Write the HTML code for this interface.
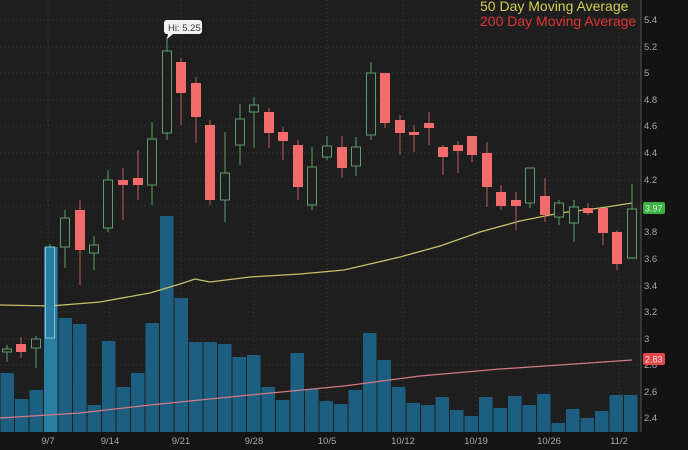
<!DOCTYPE html>
<html><head><meta charset="utf-8"><style>
html,body{margin:0;padding:0;background:#1e1e1e;width:688px;height:450px;overflow:hidden}
svg{display:block;font-family:"Liberation Sans",sans-serif}
</style></head><body>
<svg id="s" width="688" height="450" xmlns="http://www.w3.org/2000/svg">
<rect x="0" y="0" width="688" height="450" fill="#1e1e1e"/>
<rect x="641" y="0" width="47" height="450" fill="#131313"/>
<rect x="0" y="432" width="641" height="18" fill="#141414"/>
<g id="grid" stroke="#3a3a3a" stroke-width="1" stroke-dasharray="1,3"></g>
<g id="vol"></g>
<polyline fill="none" stroke="#c9c06a" stroke-width="1.3" points="0,305 50,306 100,302 150,293 180,284 195,279 210,282 250,277 300,274 344,270 400,257 440,246 480,232 520,221 560,213 600,208 632,203"/>
<polyline fill="none" stroke="#d07a86" stroke-width="1.3" points="0,418 80,413 150,405 250,395 344,386 420,376 500,369 560,365 632,360"/>
<g id="cd"></g>
<line x1="641" y1="0" x2="641" y2="432" stroke="#555"/>
<g fill="#a8a8a8" font-size="9.5">
<text x="644" y="23">5.4</text><text x="644" y="50">5.2</text><text x="644" y="76">5</text>
<text x="644" y="103">4.8</text><text x="644" y="129">4.6</text><text x="644" y="156">4.4</text>
<text x="644" y="183">4.2</text><text x="644" y="235">3.8</text><text x="644" y="262">3.6</text>
<text x="644" y="289">3.4</text><text x="644" y="315">3.2</text><text x="644" y="342">3</text>
<text x="644" y="368">2.8</text><text x="644" y="395">2.6</text><text x="644" y="421">2.4</text>
</g>
<rect x="643" y="202" width="22" height="12" rx="2" fill="#3cb043"/>
<text x="645" y="211.5" font-size="9" fill="#d8ffd8">3.97</text>
<rect x="643" y="353" width="22" height="12" rx="2" fill="#e04848"/>
<text x="645" y="362.5" font-size="9" fill="#ffe0e0">2.83</text>
<g fill="#a8a8a8" font-size="9.5" text-anchor="middle">
<text x="48" y="444">9/7</text><text x="110" y="444">9/14</text><text x="181" y="444">9/21</text>
<text x="254" y="444">9/28</text><text x="327" y="444">10/5</text><text x="403" y="444">10/12</text>
<text x="476" y="444">10/19</text><text x="549" y="444">10/26</text><text x="619" y="444">11/2</text>
</g>
<text x="480" y="11" font-size="14" fill="#cfcf50">50 Day Moving Average</text>
<text x="480" y="26" font-size="14" fill="#e03434">200 Day Moving Average</text>
<rect x="164" y="20" width="38" height="14" rx="3" fill="#f2f2f2"/>
<polygon points="168,34 173,34 167,39" fill="#f2f2f2"/>
<text x="168" y="31" font-size="9.5" fill="#333">Hi: 5.25</text>
</svg>
<script>
var NS="http://www.w3.org/2000/svg",W=function(p,t,a){var e=document.createElementNS(NS,t);for(var k in a)e.setAttribute(k,a[k]);document.getElementById(p).appendChild(e);};
[20,47,73,100,126,153,180,206,232,259,286,312,339,365,392,418].forEach(function(y){W("grid","line",{x1:0,y1:y,x2:641,y2:y});});
[48,110,181,254,327,403,476,549,619].forEach(function(x){W("grid","line",{x1:x,y1:0,x2:x,y2:432});});
var vt=[373,399,390,247,318,324,405,341,387,373,323,216,298,342,342,344,357,355,387,400,353,389,401,404,390,333,360,387,403,405,397,410,416,397,408,396,405,394,423,409,418,411,395,395];
vt.forEach(function(t,i){var x=i*14.5;W("vol","rect",{x:x+0.5,y:t,width:13.5,height:432-t,fill:i==3?"#2a7ea4":"#1d5f80"});});
var c=[[7,349,352,345,362,1],[21,344,352,337,358,0],[36,339,348,336,368,1],[50,247,338,244,340,1],[65,218,247,210,268,1],[80,210,250,200,285,0],[94,245,253,236,270,1],[108,180,228,170,232,1],[123,180,185,168,220,0],[138,178,185,150,200,0],[152,139,185,122,205,1],[167,51,133,37,140,1],[181,62,93,58,125,0],[196,83,117,77,143,0],[210,125,200,120,205,0],[225,173,200,132,222,1],[240,119,145,104,165,1],[254,105,112,97,148,1],[269,112,133,108,148,0],[283,132,141,127,160,0],[298,145,187,140,200,0],[312,167,205,147,210,1],[327,146,157,136,160,1],[342,147,168,136,178,0],[356,147,166,137,176,1],[371,73,135,62,140,1],[385,73,123,73,128,0],[400,120,133,115,155,0],[414,132,135,125,152,0],[429,123,128,112,145,0],[443,147,157,145,175,0],[458,145,151,141,173,0],[472,136,155,136,162,0],[487,153,187,142,207,0],[501,192,206,185,210,0],[516,200,206,192,230,0],[530,168,203,168,208,1],[545,196,215,178,222,0],[559,203,217,200,225,1],[574,207,223,200,242,1],[588,208,213,203,215,0],[603,208,233,208,245,0],[617,232,264,230,270,0],[632,209,258,184,259,1]];
c.forEach(function(d){var up=d[5],col=up?"#5d9e6a":"#f26c6c";W("cd","line",{x1:d[0],y1:d[3],x2:d[0],y2:d[4],stroke:up?"#5d9e6a":"#c05858","stroke-width":1});
if(up){W("cd","rect",{x:d[0]-4.5,y:d[1],width:9,height:Math.max(d[2]-d[1],2),fill:d[0]==50?"#2a7ea4":"#1f1f1f",stroke:d[0]==50?"#7fc0d8":col,"stroke-width":1});}
else W("cd","rect",{x:d[0]-5,y:d[1],width:10,height:Math.max(d[2]-d[1],2),fill:col});});
</script>
</body></html>
